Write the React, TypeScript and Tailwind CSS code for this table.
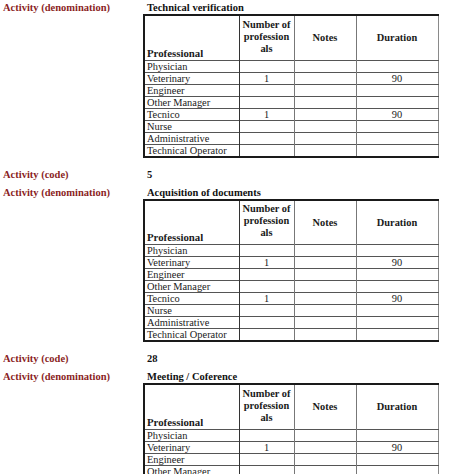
import React from "react";

const rows: [string, string, string][] = [
  ["Physician", "", ""],
  ["Veterinary", "1", "90"],
  ["Engineer", "", ""],
  ["Other Manager", "", ""],
  ["Tecnico", "1", "90"],
  ["Nurse", "", ""],
  ["Administrative", "", ""],
  ["Technical Operator", "", ""],
];

function ProTable() {
  return (
    <table className="border-collapse table-fixed w-[294px] border-l-2 border-t-2 border-b-2 border-r border-l-[#1a1a1a] border-t-[#1a1a1a] border-b-[#1a1a1a] border-r-[#8a8a8a] font-['Liberation_Serif','Times_New_Roman',serif] text-[10.4px] leading-[11px] text-[#1a1a1a]">
      <colgroup>
        <col className="w-[95px]" />
        <col className="w-[55px]" />
        <col className="w-[62px]" />
        <col className="w-[82px]" />
      </colgroup>
      <thead>
        <tr className="h-[45px] border-b border-[#555]">
          <th className="align-bottom text-left font-bold pl-[2px] pb-[1px] border-r border-[#333] text-[10.8px]">Professional</th>
          <th className="align-middle text-center font-bold leading-[12px] border-r border-[#777] pb-[2px]">
            Number of
            <br />
            profession
            <br />
            als
          </th>
          <th className="align-middle text-center font-bold border-r border-[#777]">Notes</th>
          <th className="align-middle text-center font-bold">Duration</th>
        </tr>
      </thead>
      <tbody>
        {rows.map(([name, n, d], i) => (
          <tr key={name} className={i < rows.length - 1 ? "h-[12px] border-b border-[#555]" : "h-[11px]"}>
            <td className="pl-[2px] py-0 whitespace-nowrap border-r border-[#333] font-normal">{name}</td>
            <td className="text-center py-0 border-r border-[#777]">{n}</td>
            <td className="py-0 border-r border-[#777]"></td>
            <td className="text-center py-0">{d}</td>
          </tr>
        ))}
      </tbody>
    </table>
  );
}

function Section({ code, title, first }: { code?: string; title: string; first?: boolean }) {
  return (
    <div className={first ? "" : "mt-[8px]"}>
      {code !== undefined && (
        <div className="flex h-[18px] items-center">
          <div className="w-[147px] pl-[3px] font-bold text-[#8b1f1f]">Activity (code)</div>
          <div className="font-bold text-[#111]">{code}</div>
        </div>
      )}
      <div className="flex h-[15px] items-end">
        <div className="w-[147px] pl-[3px] font-bold text-[#8b1f1f] leading-[12px]">Activity (denomination)</div>
        <div className="font-bold text-[#111] leading-[12px]">{title}</div>
      </div>
      <div className="pl-[143px]">
        <ProTable />
      </div>
    </div>
  );
}

export default function App() {
  return (
    <div className="w-[474px] h-[474px] overflow-hidden bg-white font-['Liberation_Serif','Times_New_Roman',serif] text-[10.5px] leading-[12px]">
      <div className="-mt-[1px]">
        <Section first title="Technical verification" />
        <Section code="5" title="Acquisition of documents" />
        <Section code="28" title="Meeting / Coference" />
      </div>
    </div>
  );
}
